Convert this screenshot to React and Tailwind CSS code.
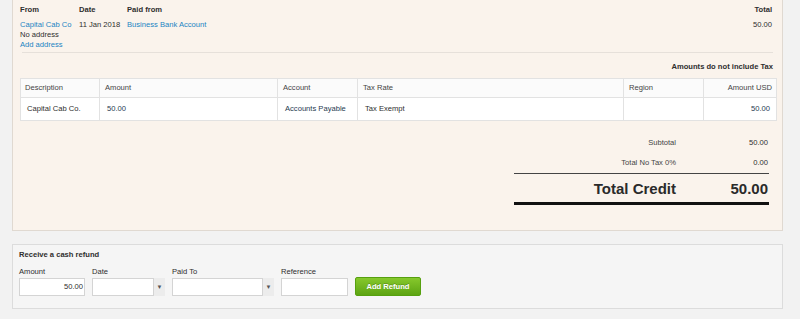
import React from "react";

export default function App() {
  const blue = "text-[#1a84c3]";
  const navy = "text-[#263a4f]";
  return (
    <div className="w-[800px] h-[319px] overflow-hidden bg-[#f2f2f2] font-['Liberation_Sans',Arial,sans-serif] text-[7.6px] leading-[10px] text-[#2e2e2e] pl-[12px] pr-[17px]">
      <div className="bg-[#faf3ec] border-x border-b border-[#e0d9d1] h-[231px] pl-[7px] pr-[6px]">
        <div className="flex pt-[5px]">
          <div className="w-[59px]">
            <div className="font-bold">From</div>
            <div className={`mt-[5px] ${blue}`}>Capital Cab Co</div>
            <div>No address</div>
            <div className={blue}>Add address</div>
          </div>
          <div className="w-[48px]">
            <div className="font-bold">Date</div>
            <div className="mt-[5px]">11 Jan 2018</div>
          </div>
          <div className="flex-1">
            <div className="font-bold">Paid from</div>
            <div className={`mt-[5px] ${blue}`}>Business Bank Account</div>
          </div>
          <div className="text-right pr-[4px]">
            <div className="font-bold">Total</div>
            <div className="mt-[5px]">50.00</div>
          </div>
        </div>
        <div className="mt-[2px] h-px bg-[#e6e0da] ml-[2px] mr-[3px]" />
        <div className="mt-[9px] text-right pr-[3px] font-bold">Amounts do not include Tax</div>
        <table className="mt-[6px] w-full table-fixed border-collapse bg-white">
          <colgroup>
            <col className="w-[79px]" />
            <col className="w-[178px]" />
            <col className="w-[80px]" />
            <col className="w-[266px]" />
            <col className="w-[80px]" />
            <col className="w-[73px]" />
          </colgroup>
          <thead>
            <tr className="h-[19px] bg-[#fbfbfb] text-[#444]">
              <th className="border border-[#e2e2e2] font-normal text-left pl-[4px]">Description</th>
              <th className="border border-[#e2e2e2] font-normal text-left pl-[5px]">Amount</th>
              <th className="border border-[#e2e2e2] font-normal text-left pl-[5px]">Account</th>
              <th className="border border-[#e2e2e2] font-normal text-left pl-[5px]">Tax Rate</th>
              <th className="border border-[#e2e2e2] font-normal text-left pl-[5px]">Region</th>
              <th className="border border-[#e2e2e2] font-normal text-right pr-[4px]">Amount USD</th>
            </tr>
          </thead>
          <tbody>
            <tr className="h-[23px]">
              <td className="border border-[#e2e2e2] pl-[6px]">Capital Cab Co.</td>
              <td className={`border border-[#e2e2e2] pl-[7px] ${navy}`}>50.00</td>
              <td className={`border border-[#e2e2e2] pl-[7px] ${navy}`}>Accounts Payable</td>
              <td className="border border-[#e2e2e2] pl-[7px]">Tax Exempt</td>
              <td className="border border-[#e2e2e2]"></td>
              <td className={`border border-[#e2e2e2] text-right pr-[6px] ${navy}`}>50.00</td>
            </tr>
          </tbody>
        </table>
        <div className="flex justify-end pr-[7px]">
          <div className="w-[255px] mt-[17px]">
            <div className="flex">
              <div className="flex-1 text-right text-[#444]">Subtotal</div>
              <div className="w-[93px] text-right pr-[1px]">50.00</div>
            </div>
            <div className="flex mt-[10px]">
              <div className="flex-1 text-right text-[#444]">Total No Tax 0%</div>
              <div className="w-[93px] text-right pr-[1px]">0.00</div>
            </div>
            <div className="mt-[5px] h-px bg-[#444]" />
            <div className="flex pt-[6px] text-[15px] leading-[17px] font-bold text-[#2a2a2a]">
              <div className="flex-1 text-right">Total Credit</div>
              <div className="w-[93px] text-right pr-[1px]">50.00</div>
            </div>
            <div className="mt-[5px] h-[3px] bg-[#111]" />
          </div>
        </div>
      </div>

      <div className="mt-[13px] h-[65px] bg-[#f5f5f5] border border-[#dcdcdc] pl-[6px] pt-[5px]">
        <div className="font-bold">Receive a cash refund</div>
        <div className="mt-[7px] flex items-end gap-[7px]">
          <div className="w-[66px]">
            <div>Amount</div>
            <div className="mt-[1px] h-[18px] bg-white border border-[#d4d4d4] text-right pr-[1px] leading-[16px]">50.00</div>
          </div>
          <div className="w-[73px]">
            <div>Date</div>
            <div className="mt-[1px] h-[18px] flex">
              <div className="flex-1 bg-white border border-[#d4d4d4]" />
              <div className="w-[11px] bg-[#ececec] flex items-center justify-center text-[6px] text-[#555]">▼</div>
            </div>
          </div>
          <div className="w-[102px]">
            <div>Paid To</div>
            <div className="mt-[1px] h-[18px] flex">
              <div className="flex-1 bg-white border border-[#d4d4d4]" />
              <div className="w-[11px] bg-[#ececec] flex items-center justify-center text-[6px] text-[#555]">▼</div>
            </div>
          </div>
          <div className="w-[67px]">
            <div>Reference</div>
            <div className="mt-[1px] h-[18px] bg-white border border-[#d4d4d4]" />
          </div>
          <div className="w-[66px] h-[19px] rounded-[2px] border border-[#56a00f] bg-gradient-to-b from-[#86c82c] to-[#5da412] text-white font-bold flex items-center justify-center [text-shadow:0_-1px_0_rgba(0,0,0,0.2)]">
            Add Refund
          </div>
        </div>
      </div>
    </div>
  );
}
